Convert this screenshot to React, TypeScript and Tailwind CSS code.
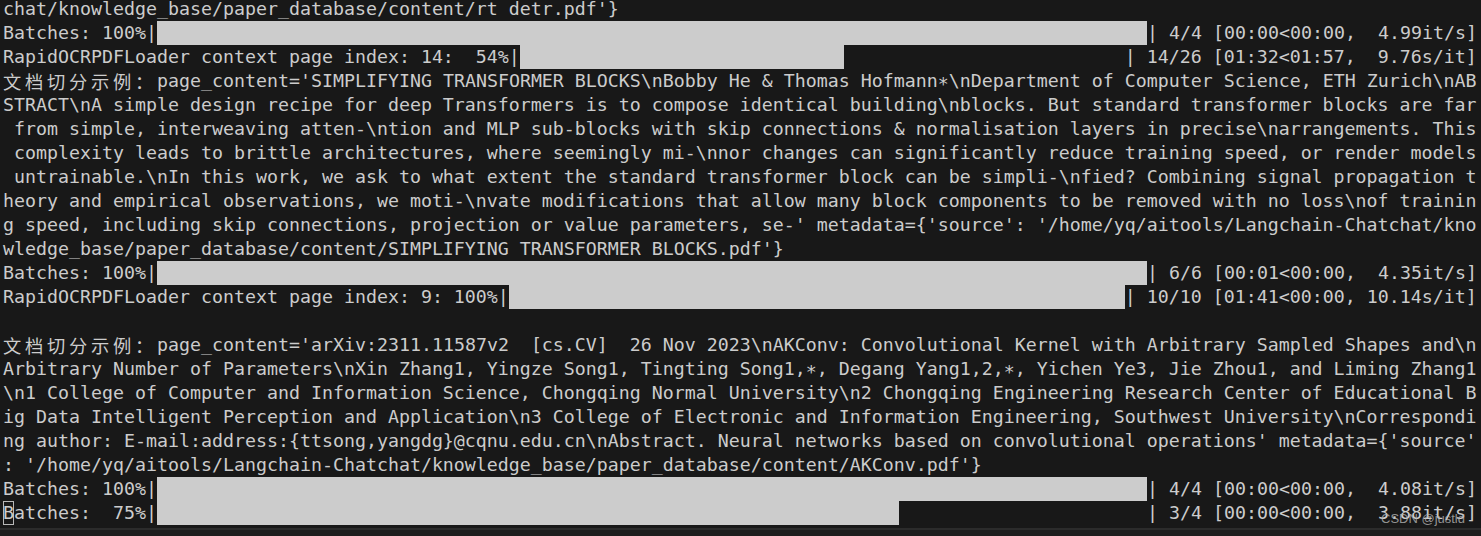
const cjk = '文档切分示例：';

function Row({ children }: { children?: React.ReactNode }) {
  return <div className="flex h-[24px] whitespace-pre">{children}</div>;
}

function Lead() {
  return <span className="font-['Noto_Sans_CJK_SC',sans-serif] tracking-[3.73px]">{cjk}</span>;
}

function Bar({ left, right, track, fill }: { left: React.ReactNode; right: string; track: string; fill: string }) {
  return (
    <Row>
      <span>{left}</span>
      <span className={`flex h-[24px] ${track}`}>
        <span className={`h-[24px] bg-[#cccccc] ${fill}`} />
      </span>
      <span>{right}</span>
    </Row>
  );
}

export default function App() {
  return (
    <div className="relative flex h-[536px] w-full flex-col overflow-hidden bg-[#181818] text-[#cccccc]">
      <div className="h-[528px] overflow-hidden pl-[3px] font-['DejaVu_Sans_Mono','Noto_Sans_CJK_SC',monospace] text-[18.27px] leading-[24px]">
        <div className="-mt-[3px]">
          <Row>chat/knowledge_base/paper_database/content/rt detr.pdf'{'}'}</Row>
          <Bar left="Batches: 100%|" track="w-[990px]" fill="w-[990px]" right="| 4/4 [00:00<00:00,  4.99it/s]" />
          <Bar left="RapidOCRPDFLoader context page index: 14:  54%|" track="w-[605px]" fill="w-[324px]" right="| 14/26 [01:32<01:57,  9.76s/it]" />
          <Row>
            <Lead />
            {String.raw`page_content='SIMPLIFYING TRANSFORMER BLOCKS\nBobby He & Thomas Hofmann∗\nDepartment of Computer Science, ETH Zurich\nAB`}
          </Row>
          <Row>{String.raw`STRACT\nA simple design recipe for deep Transformers is to compose identical building\nblocks. But standard transformer blocks are far`}</Row>
          <Row>{String.raw` from simple, interweaving atten-\ntion and MLP sub-blocks with skip connections & normalisation layers in precise\narrangements. This`}</Row>
          <Row>{String.raw` complexity leads to brittle architectures, where seemingly mi-\nnor changes can significantly reduce training speed, or render models`}</Row>
          <Row>{String.raw` untrainable.\nIn this work, we ask to what extent the standard transformer block can be simpli-\nfied? Combining signal propagation t`}</Row>
          <Row>{String.raw`heory and empirical observations, we moti-\nvate modifications that allow many block components to be removed with no loss\nof trainin`}</Row>
          <Row>{String.raw`g speed, including skip connections, projection or value parameters, se-' metadata={'source': '/home/yq/aitools/Langchain-Chatchat/kno`}</Row>
          <Row>{String.raw`wledge_base/paper_database/content/SIMPLIFYING TRANSFORMER BLOCKS.pdf'}`}</Row>
          <Bar left="Batches: 100%|" track="w-[990px]" fill="w-[990px]" right="| 6/6 [00:01<00:00,  4.35it/s]" />
          <Bar left="RapidOCRPDFLoader context page index: 9: 100%|" track="w-[616px]" fill="w-[616px]" right="| 10/10 [01:41<00:00, 10.14s/it]" />
          <Row> </Row>
          <Row>
            <Lead />
            {String.raw`page_content='arXiv:2311.11587v2  [cs.CV]  26 Nov 2023\nAKConv: Convolutional Kernel with Arbitrary Sampled Shapes and\n`}
          </Row>
          <Row>{String.raw`Arbitrary Number of Parameters\nXin Zhang1, Yingze Song1, Tingting Song1,∗, Degang Yang1,2,∗, Yichen Ye3, Jie Zhou1, and Liming Zhang1`}</Row>
          <Row>{String.raw`\n1 College of Computer and Information Science, Chongqing Normal University\n2 Chongqing Engineering Research Center of Educational B`}</Row>
          <Row>{String.raw`ig Data Intelligent Perception and Application\n3 College of Electronic and Information Engineering, Southwest University\nCorrespondi`}</Row>
          <Row>{String.raw`ng author: E-mail:address:{ttsong,yangdg}@cqnu.edu.cn\nAbstract. Neural networks based on convolutional operations' metadata={'source'`}</Row>
          <Row>{String.raw`: '/home/yq/aitools/Langchain-Chatchat/knowledge_base/paper_database/content/AKConv.pdf'}`}</Row>
          <Bar left="Batches: 100%|" track="w-[990px]" fill="w-[990px]" right="| 4/4 [00:00<00:00,  4.08it/s]" />
          <Bar
            left={
              <>
                <span className="inline-block h-[24px] w-[11px] shadow-[inset_0_0_0_1px_#b8b8b8]">B</span>
                {'atches:  75%|'}
              </>
            }
            track="w-[990px]"
            fill="w-[742px]"
            right="| 3/4 [00:00<00:00,  3.88it/s]"
          />
        </div>
      </div>
      <div className="h-[2px] bg-[#2b2b2b]" />
      <div className="flex-1 bg-[#1e1e1e]" />
      <div className="absolute right-[16px] top-[511px] font-['Liberation_Sans',sans-serif] text-[13px] leading-[16px] text-[#b4b4b4]/80">
        CSDN @justld
      </div>
    </div>
  );
}
